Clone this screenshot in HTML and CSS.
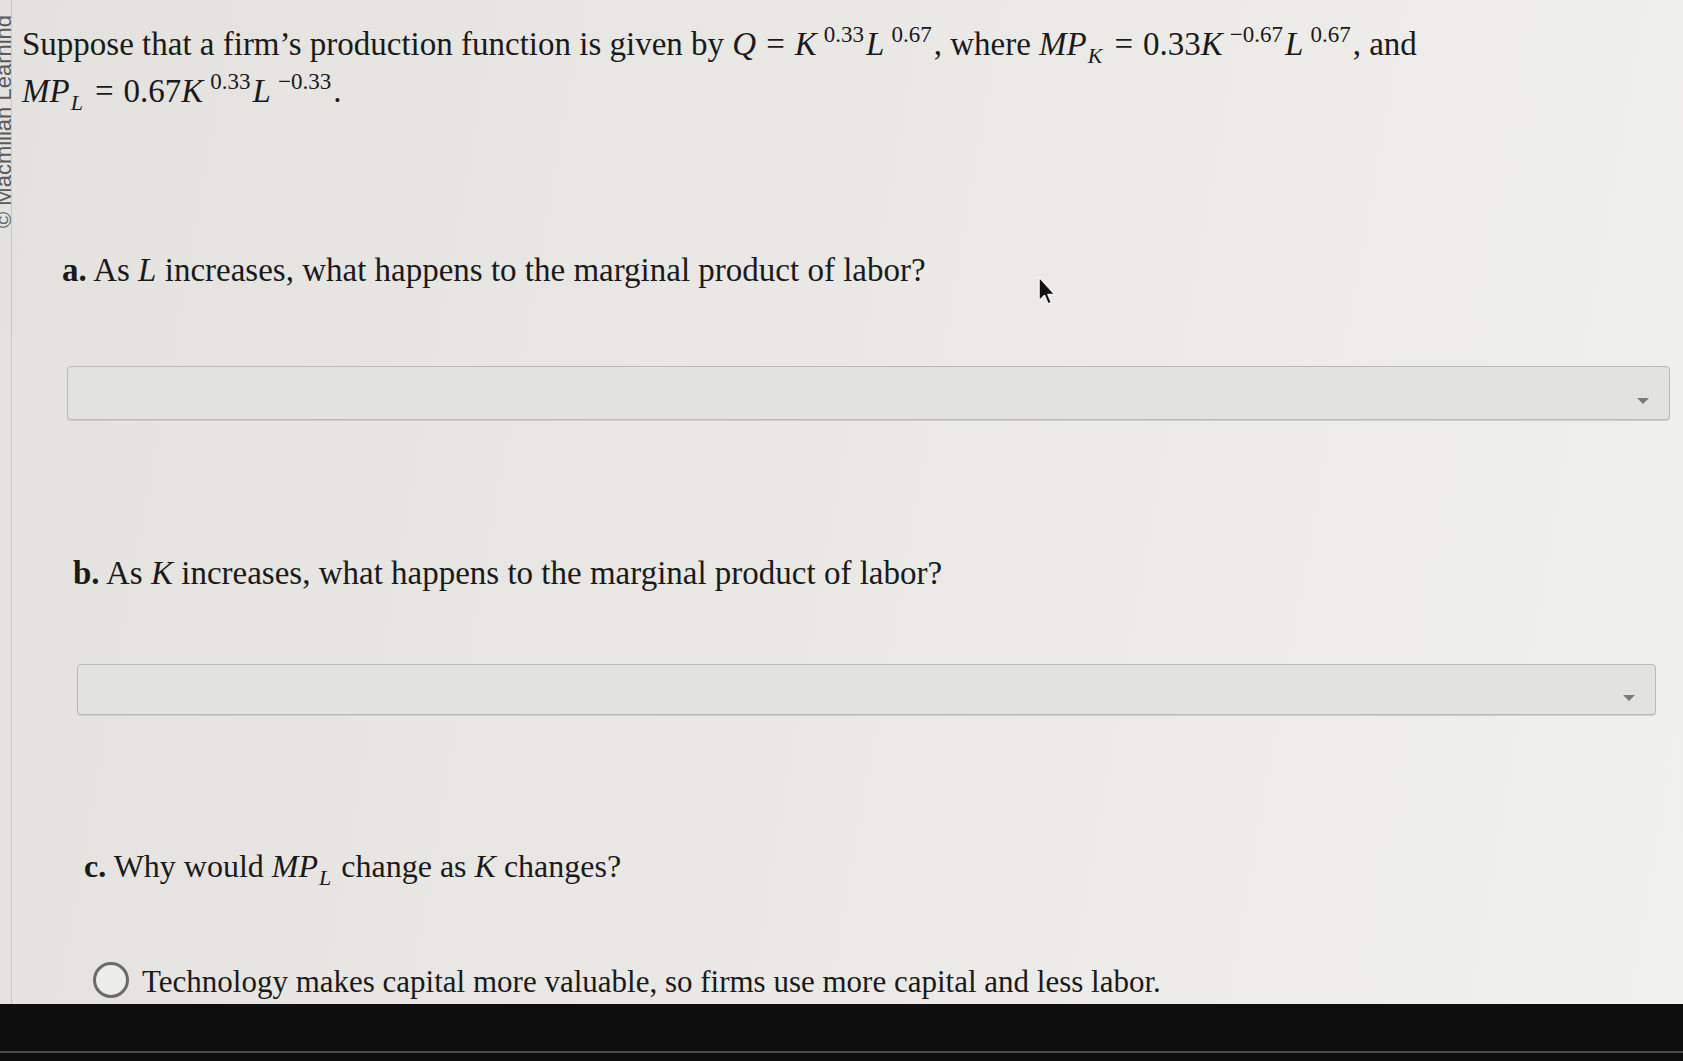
FILE: index.html
```html
<!DOCTYPE html>
<html lang="en">
<head>
<meta charset="utf-8">
<title>Production function question</title>
<link rel="stylesheet" href="styles.css">
</head>
<body>
<div class="screen">
  <div class="page">
    <div class="edge"><span class="edge-text">© Macmillan Learning</span></div>
    <main class="content">
      <p class="intro">Suppose that a firm’s production function is given by <i>Q</i><span class="eq">=</span><i>K</i><sup>0.33</sup><i>L</i><sup>0.67</sup>, where <i>MP</i><sub><i>K</i></sub><span class="eq">=</span>0.33<i>K</i><sup>−0.67</sup><i>L</i><sup>0.67</sup>, and <br><i>MP</i><sub><i>L</i></sub><span class="eq">=</span>0.67<i>K</i><sup>0.33</sup><i>L</i><sup>−0.33</sup>.</p>

      <section class="part part-a">
        <p class="question"><span class="label">a.</span> As <i>L</i> increases, what happens to the marginal product of labor?</p>
        <div class="select"><span class="caret"></span></div>
      </section>

      <section class="part part-b">
        <p class="question"><span class="label">b.</span> As <i>K</i> increases, what happens to the marginal product of labor?</p>
        <div class="select"><span class="caret"></span></div>
      </section>

      <section class="part part-c">
        <p class="question"><span class="label">c.</span> Why would <i>MP</i><sub><i>L</i></sub> change as <i>K</i> changes?</p>
        <label class="option"><span class="radio"></span><span>Technology makes capital more valuable, so firms use more capital and less labor.</span></label>
      </section>
    </main>
    <div class="cursor">
      <svg width="20" height="32" viewBox="0 0 20 32"><path d="M2 1 L2 25 L7.5 19.5 L11 28 L14.5 26.5 L11 18.5 L18 18.5 Z" fill="#111" stroke="#f4f4f4" stroke-width="1.6" stroke-linejoin="round"/></svg>
    </div>
  </div>
  <div class="bezel"><div class="bezel-line"></div></div>
</div>
</body>
</html>
```

FILE: styles.css
```css
html, body {
  margin: 0;
  padding: 0;
  background: #0f0f0f;
}

.screen {
  width: 1683px;
  height: 1061px;
  display: flex;
  flex-direction: column;
  overflow: hidden;
}

.page {
  position: relative;
  height: 1004px;
  display: flex;
  background: linear-gradient(100deg, #e3e2de 0%, #e9e8e5 45%, #f0f0ee 100%);
  font-family: "Liberation Serif", "Times New Roman", serif;
  color: #1a1a1a;
}

.edge {
  width: 11px;
  border-right: 1.5px solid #c9c9c6;
  overflow: hidden;
  position: relative;
  flex: none;
}

.edge-text {
  position: absolute;
  left: -9px;
  top: 228px;
  transform: rotate(-90deg);
  transform-origin: left top;
  font-family: "Liberation Sans", Arial, sans-serif;
  font-size: 22px;
  color: #5a5a5a;
  white-space: nowrap;
}

.content {
  flex: 1;
  padding-top: 21px;
  font-size: 33px;
  line-height: 47px;
}

.content p {
  margin: 0;
}

.intro {
  padding-left: 10px;
}

i {
  font-style: italic;
}

.eq {
  padding: 0 10px;
}

sup {
  font-size: 23px;
  vertical-align: 13px;
  line-height: 0;
  padding-left: 7px;
  padding-right: 2px;
}

sub {
  font-size: 22px;
  vertical-align: -8px;
  line-height: 0;
  padding-left: 1px;
  padding-right: 2px;
}

.label {
  font-weight: bold;
}

.part-a {
  margin-top: 132px;
  padding-left: 50px;
}

.part-b {
  margin-top: 130px;
  padding-left: 61px;
}

.part-c {
  margin-top: 128px;
  padding-left: 72px;
  font-size: 32px;
}

.part-a .select {
  margin-top: 72px;
  margin-left: 5px;
  width: 1603px;
  height: 54px;
}

.part-b .select {
  margin-top: 67px;
  margin-left: 4px;
  width: 1579px;
  height: 51px;
}

.select {
  position: relative;
  box-sizing: border-box;
  background: #e2e2e0;
  border: 1.5px solid #b9b9b7;
  border-radius: 4px;
  box-shadow: 0 1px 0 #cfcfcd;
}

.caret {
  position: absolute;
  right: 20px;
  top: 50%;
  margin-top: 5px;
  width: 0;
  height: 0;
  border-left: 6px solid transparent;
  border-right: 6px solid transparent;
  border-top: 6px solid #7a7a7a;
}

.option {
  display: flex;
  align-items: center;
  gap: 13px;
  margin-top: 68px;
  margin-left: 9px;
  font-size: 31px;
}

.radio {
  width: 30px;
  height: 30px;
  border: 3px solid #6a6a6a;
  border-radius: 50%;
  background: #ececea;
  flex: none;
  position: relative;
  top: -2px;
}

.cursor {
  position: absolute;
  left: 1037px;
  top: 276px;
}

.bezel {
  flex: 1;
  background: #0e0e0e;
  position: relative;
}

.bezel-line {
  position: absolute;
  left: 0;
  right: 0;
  top: 47px;
  height: 2px;
  background: #4a4a46;
}
```
